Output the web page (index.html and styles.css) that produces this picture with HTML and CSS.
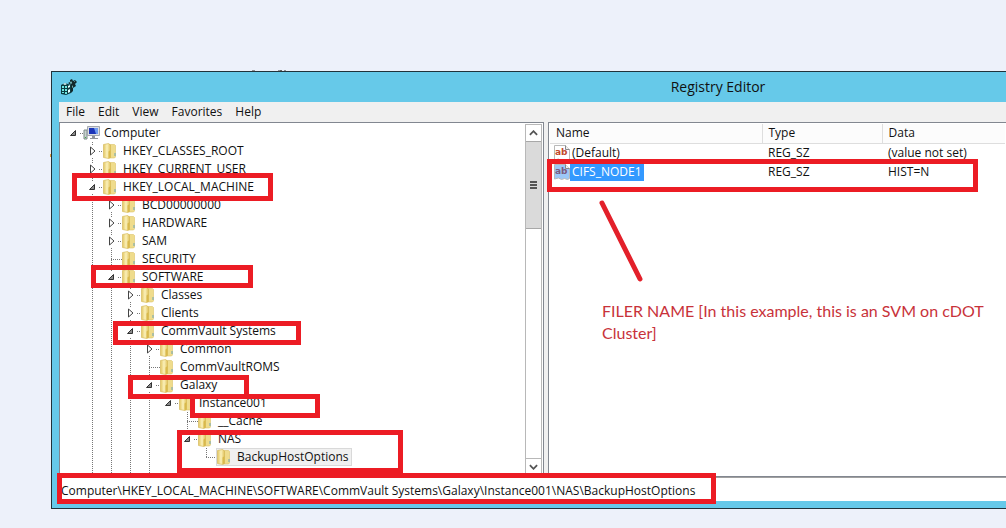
FILE: index.html
```
<!DOCTYPE html>
<html lang="en">
<head>
    <meta charset="utf-8">
    <title>Registry Editor</title>
    <link rel="stylesheet" href="styles.css">
</head>
<body>
    <svg class="symbols" width="0" height="0" aria-hidden="true">
        <defs>
            <linearGradient id="gold" x1="0" x2="1" y1="0" y2="0">
                <stop offset="0" stop-color="#e2c662"/>
                <stop offset="0.500" stop-color="#fbf1ba"/>
                <stop offset="1" stop-color="#e0c25c"/>
            </linearGradient>
            <symbol id="folder" viewBox="0 0 16 16">
                <path d="M7 1.500h5.500l1 1V14l-1 1H7z" fill="#efdc8c" stroke="#dcc268" stroke-width="0.600"/>
                <path d="M1.500 1.500L6.500.5l2 1.500v12.500l-2 1-5-1z" fill="url(#gold)" stroke="#d4b653" stroke-width="0.600"/>
                <path d="M6.500 8.500L8.500 7v7.500l-2 1z" fill="#d9b94c"/>
                <path d="M13 10v3" stroke="#6fa5b5"/>
            </symbol>
            <symbol id="open" viewBox="0 0 8 8">
                <path d="M6.500 1.500v5h-5z" fill="#8a8a8a" stroke="#333"/>
            </symbol>
            <symbol id="closed" viewBox="0 0 8 10">
                <path d="M2.500 1v8L7 5z" fill="#fff" stroke="#444"/>
            </symbol>
            <symbol id="string" viewBox="0 0 16 16">
                <path d="M.5.5h11l4 4v10l-2 1-3-1-3 1-3-1.500-4 1z" class="sheet"/>
                <path d="M11.500.5v4h4" fill="#eee" stroke="#888"/>
                <text x="1" y="10" class="glyph">ab</text>
            </symbol>
        </defs>
    </svg>

    <div class="window">
        <header class="titlebar">
            <svg class="app-icon" viewBox="0 0 16 16" aria-hidden="true">
                <path d="M0 6l4-2 6 2v8l-5 2-5-1z" fill="#0b3b40"/>
                <path d="M1 7h2v2H1zM4 7h2v2H4zM1 10h2v2H1zM4 10h2v2H4zM1 13h2v1H1zM4 13h2v2H4z" fill="#6fe6e2"/>
                <path d="M2 5l2-1 2 1-2 1zM7 7l2-1v2l-2 1zM7 11l2-1v3l-2 1z" fill="#e8ffff"/>
                <path d="M7 4l2-1V1l2-1 1 2 2-1 2 2-2 2 1 2-3 2v3l-2 2V6z" fill="#12282b"/>
                <path d="M9 4l1-2 1 2-1 1zM13 3l1-1v1zM11 8l1-2v3z" fill="#8fd9dc"/>
            </svg>
            <h1>Registry Editor</h1>
        </header>

        <nav class="menu">
            <button>File</button>
            <button>Edit</button>
            <button>View</button>
            <button>Favorites</button>
            <button>Help</button>
        </nav>

        <main class="panes">
            <section class="tree-pane">
                <div class="tree">
                    <div class="row root">
                        <button class="toggle" aria-label="Collapse"><svg class="open"><use href="#open"/></svg></button>
                        <svg class="computer" viewBox="0 0 18 16" aria-hidden="true">
                            <path d="M1 5h3v9H1z" fill="#c9d3d0" stroke="#7c8a86"/>
                            <path d="M2 12h1v1H2z" fill="#3fae49"/>
                            <path d="M4.500 1.500h12v9h-12z" fill="#dcdfe4" stroke="#a3a7ae"/>
                            <path d="M6 3h9v6H6z" fill="#1c35b8"/>
                            <path d="M11 3h4v6h-2z" fill="#6f9bf0"/>
                            <path d="M9 11h3v2h3v1H7v-1h2z" fill="#8f949b"/>
                        </svg>
                        <span>Computer</span>
                    </div>
                    <ul>
                        <li><div class="row"><button class="toggle" aria-label="Expand"><svg class="closed"><use href="#closed"/></svg></button><svg class="folder"><use href="#folder"/></svg><span>HKEY_CLASSES_ROOT</span></div></li>
                        <li><div class="row"><button class="toggle" aria-label="Expand"><svg class="closed"><use href="#closed"/></svg></button><svg class="folder"><use href="#folder"/></svg><span>HKEY_CURRENT_USER</span></div></li>
                        <li>
                            <div class="row"><button class="toggle" aria-label="Collapse"><svg class="open"><use href="#open"/></svg></button><svg class="folder"><use href="#folder"/></svg><span>HKEY_LOCAL_MACHINE</span></div>
                            <ul>
                                <li><div class="row"><button class="toggle" aria-label="Expand"><svg class="closed"><use href="#closed"/></svg></button><svg class="folder"><use href="#folder"/></svg><span>BCD00000000</span></div></li>
                                <li><div class="row"><button class="toggle" aria-label="Expand"><svg class="closed"><use href="#closed"/></svg></button><svg class="folder"><use href="#folder"/></svg><span>HARDWARE</span></div></li>
                                <li><div class="row"><button class="toggle" aria-label="Expand"><svg class="closed"><use href="#closed"/></svg></button><svg class="folder"><use href="#folder"/></svg><span>SAM</span></div></li>
                                <li><div class="row leaf"><svg class="folder"><use href="#folder"/></svg><span>SECURITY</span></div></li>
                                <li>
                                    <div class="row"><button class="toggle" aria-label="Collapse"><svg class="open"><use href="#open"/></svg></button><svg class="folder"><use href="#folder"/></svg><span>SOFTWARE</span></div>
                                    <ul>
                                        <li><div class="row"><button class="toggle" aria-label="Expand"><svg class="closed"><use href="#closed"/></svg></button><svg class="folder"><use href="#folder"/></svg><span>Classes</span></div></li>
                                        <li><div class="row"><button class="toggle" aria-label="Expand"><svg class="closed"><use href="#closed"/></svg></button><svg class="folder"><use href="#folder"/></svg><span>Clients</span></div></li>
                                        <li>
                                            <div class="row"><button class="toggle" aria-label="Collapse"><svg class="open"><use href="#open"/></svg></button><svg class="folder"><use href="#folder"/></svg><span>CommVault Systems</span></div>
                                            <ul>
                                                <li><div class="row"><button class="toggle" aria-label="Expand"><svg class="closed"><use href="#closed"/></svg></button><svg class="folder"><use href="#folder"/></svg><span>Common</span></div></li>
                                                <li><div class="row leaf"><svg class="folder"><use href="#folder"/></svg><span>CommVaultROMS</span></div></li>
                                                <li class="more">
                                                    <div class="row"><button class="toggle" aria-label="Collapse"><svg class="open"><use href="#open"/></svg></button><svg class="folder"><use href="#folder"/></svg><span>Galaxy</span></div>
                                                    <ul>
                                                        <li class="last">
                                                            <div class="row"><button class="toggle" aria-label="Collapse"><svg class="open"><use href="#open"/></svg></button><svg class="folder"><use href="#folder"/></svg><span>Instance001</span></div>
                                                            <ul>
                                                                <li><div class="row leaf"><svg class="folder"><use href="#folder"/></svg><span>__Cache</span></div></li>
                                                                <li class="last">
                                                                    <div class="row"><button class="toggle" aria-label="Collapse"><svg class="open"><use href="#open"/></svg></button><svg class="folder"><use href="#folder"/></svg><span>NAS</span></div>
                                                                    <ul>
                                                                        <li class="last"><div class="row leaf"><div class="current"><svg class="folder"><use href="#folder"/></svg><span>BackupHostOptions</span></div></div></li>
                                                                    </ul>
                                                                </li>
                                                            </ul>
                                                        </li>
                                                    </ul>
                                                </li>
                                            </ul>
                                        </li>
                                    </ul>
                                </li>
                            </ul>
                        </li>
                    </ul>
                </div>
                <div class="scrollbar">
                    <button aria-label="Scroll up"><svg viewBox="0 0 10 6"><path d="M1 5l4-4 4 4"/></svg></button>
                    <div class="thumb"><i></i><i></i><i></i></div>
                    <button class="down" aria-label="Scroll down"><svg viewBox="0 0 10 6"><path d="M1 1l4 4 4-4"/></svg></button>
                </div>
            </section>

            <section class="list-pane">
                <table>
                    <thead>
                        <tr><th class="name">Name</th><th class="type">Type</th><th>Data</th></tr>
                    </thead>
                    <tbody>
                        <tr>
                            <td><div class="value"><svg><use href="#string"/></svg><span>(Default)</span></div></td>
                            <td>REG_SZ</td>
                            <td>(value not set)</td>
                        </tr>
                        <tr>
                            <td><div class="value selected"><svg><use href="#string"/></svg><span>CIFS_NODE1</span></div></td>
                            <td>REG_SZ</td>
                            <td>HIST=N</td>
                        </tr>
                    </tbody>
                </table>
            </section>
        </main>

        <footer class="status">Computer\HKEY_LOCAL_MACHINE\SOFTWARE\CommVault Systems\Galaxy\Instance001\NAS\BackupHostOptions</footer>
    </div>

    <!-- Scraps of what lies behind the window -->
    <svg class="behind" viewBox="0 0 240 92" aria-hidden="true">
        <path d="M202 1h3M230 0h2M234 0h2M228 1h4" stroke="#333"/>
        <path d="M.5 84v3" stroke="#e0a040"/>
    </svg>

    <!-- Marks drawn over the window -->
    <div class="mark mark-machine"></div>
    <div class="mark mark-software"></div>
    <div class="mark mark-commvault"></div>
    <div class="mark mark-galaxy"></div>
    <div class="mark mark-instance"></div>
    <div class="mark mark-nas"></div>
    <div class="mark mark-path"></div>
    <div class="mark mark-value"></div>
    <svg class="pointer" viewBox="0 0 46 84" aria-hidden="true"><path d="M4 4l38 76"/></svg>
    <p class="note">FILER NAME [In this example, this is an SVM on cDOT Cluster]</p>
</body>
</html>
```
FILE: styles.css
```
* {
    box-sizing: border-box;
}

body {
    position: relative;
    display: flex;
    height: 100vh;
    margin: 0;
    padding: 71px 0 19px 51px;
    overflow: hidden;
    background-color: #edf1fa;
    color: #111;
    font-family: "Open Sans", "Noto Sans", sans-serif;
    font-size: 12px;
    line-height: 18px;
}

button {
    padding: 0;
    border: none;
    background: none;
    color: inherit;
    font: inherit;
}

svg {
    flex: none;
}

.symbols {
    position: absolute;
}

/* Window */
.window {
    display: flex;
    flex: 1;
    flex-direction: column;
    min-width: 0;
    padding: 0 0 7px 7px;
    border: 1px solid #20323a;
    border-right: none;
    background-color: #66c9e9;
}

.titlebar {
    display: flex;
    align-items: center;
    height: 30px;
}

.app-icon {
    width: 16px;
    height: 16px;
    margin-left: 2px;
}

h1 {
    flex: 1;
    margin: 0;
    padding-left: 353px;
    font-size: 14px;
    font-weight: normal;
    text-align: center;
}

.menu {
    display: flex;
    gap: 13px;
    height: 20px;
    padding-left: 7px;
    background-color: #f0f0f0;
}

.panes {
    display: flex;
    flex: 1;
    gap: 4px;
    min-height: 0;
    background-color: #f0f0f0;
}

.tree-pane,
.list-pane {
    border: 1px solid #828790;
    background-color: #fff;
}

/* Tree */
.tree-pane {
    display: flex;
    flex: none;
    width: 485px;
    overflow: hidden;
}

.tree {
    flex: 1;
    padding: 1px 0 0 13px;
}

ul {
    margin: 0;
    padding-left: 19px;
    list-style: none;
}

li {
    background: repeating-linear-gradient(#777 0 1px, transparent 1px 2px) no-repeat left top / 1px 100%;
}

.last {
    background-size: 1px 9px;
}

.more {
    padding-bottom: 12px;
}

.row {
    display: flex;
    align-items: center;
    height: 18px;
    background: repeating-linear-gradient(90deg, #777 0 1px, transparent 1px 2px) no-repeat 7px 9px / 4px 1px;
    white-space: nowrap;
}

.leaf {
    padding-left: 10px;
    background-position: 0 9px;
    background-size: 11px 1px;
}

.toggle {
    display: flex;
    align-items: center;
    justify-content: center;
    width: 8px;
    height: 12px;
    margin: 0 6px 0 -4px;
    background-color: #fff;
}

.open {
    width: 8px;
    height: 8px;
}

.closed {
    width: 8px;
    height: 10px;
}

.folder {
    width: 16px;
    height: 16px;
    margin-right: 5px;
}

.computer {
    width: 18px;
    height: 16px;
    margin-right: 3px;
}

.current {
    display: flex;
    align-items: center;
    height: 18px;
    padding-right: 3px;
    outline: 1px solid #d9d9d9;
    outline-offset: -1px;
    background-color: #f0f0f0;
}

/* Scrollbar */
.scrollbar {
    display: flex;
    flex-direction: column;
    width: 17px;
    margin: 1px;
    border: 1px solid #b8b8b8;
}

.scrollbar button {
    display: flex;
    align-items: center;
    justify-content: center;
    height: 16px;
}

.scrollbar svg {
    width: 9px;
    height: 6px;
    fill: none;
    stroke: #555;
    stroke-width: 2;
}

.scrollbar .down {
    margin-top: auto;
    border-top: 1px solid #b8b8b8;
}

.thumb {
    display: flex;
    flex-direction: column;
    align-items: center;
    justify-content: center;
    gap: 1px;
    height: 88px;
    border: solid #a8a8a8;
    border-width: 1px 0;
    background-color: #dadada;
}

.thumb i {
    width: 7px;
    height: 2px;
    background-color: #555;
}

/* Value list */
.list-pane {
    flex: 1;
    padding: 1px;
    border-right: none;
}

table {
    width: 100%;
    border-collapse: collapse;
    table-layout: fixed;
}

th,
td {
    height: 19px;
    padding: 0 0 0 6px;
    font-weight: normal;
    text-align: left;
    line-height: 18px;
}

th {
    border-right: 1px solid #dedede;
    border-bottom: 1px solid #dedede;
    background-color: #fcfcfc;
}

th:last-child {
    border-right: none;
}

.name {
    width: 212px;
}

.type {
    width: 120px;
}

.value {
    display: flex;
    align-items: center;
    margin-left: -2px;
}

.value svg {
    width: 16px;
    height: 16px;
    color: #fff;
    fill: #c2492c;
}

.value span {
    padding: 0 2px;
}

.sheet {
    fill: currentColor;
    stroke: #b9b9b9;
}

.glyph {
    font-family: "DejaVu Sans", sans-serif;
    font-size: 9px;
    font-weight: bold;
}

.selected svg {
    color: #9cc8f8;
    fill: #7a5a80;
}

.selected span {
    background-color: #3399ff;
    color: #fff;
}

.status {
    height: 24px;
    padding: 4px 0 0 2px;
    border-top: 1px solid #a0a0a0;
    background-color: #fff;
    white-space: nowrap;
}

.behind {
    position: absolute;
    left: 50px;
    top: 70px;
    width: 240px;
    height: 92px;
}

/* Red marks */
.mark {
    position: absolute;
    border: 5px solid #ec1c24;
}

.mark-machine {
    left: 72px;
    top: 173px;
    width: 201px;
    height: 28px;
}

.mark-software {
    left: 91px;
    top: 265px;
    width: 162px;
    height: 23px;
}

.mark-commvault {
    left: 113px;
    top: 321px;
    width: 188px;
    height: 24px;
}

.mark-galaxy {
    left: 128px;
    top: 375px;
    width: 121px;
    height: 24px;
}

.mark-instance {
    left: 190px;
    top: 394px;
    width: 130px;
    height: 24px;
}

.mark-nas {
    left: 177px;
    top: 430px;
    width: 226px;
    height: 43px;
}

.mark-path {
    left: 57px;
    top: 473px;
    width: 659px;
    height: 31px;
}

.mark-value {
    left: 547px;
    top: 159px;
    width: 431px;
    height: 33px;
}

.pointer {
    position: absolute;
    left: 598px;
    top: 199px;
    width: 46px;
    height: 84px;
    fill: none;
    stroke: #e3202a;
    stroke-width: 5;
    stroke-linecap: round;
}

.note {
    position: absolute;
    left: 602px;
    top: 300px;
    width: 396px;
    margin: 0;
    color: #c8323a;
    font-family: Lato, sans-serif;
    font-size: 16px;
    line-height: 22px;
}
```
